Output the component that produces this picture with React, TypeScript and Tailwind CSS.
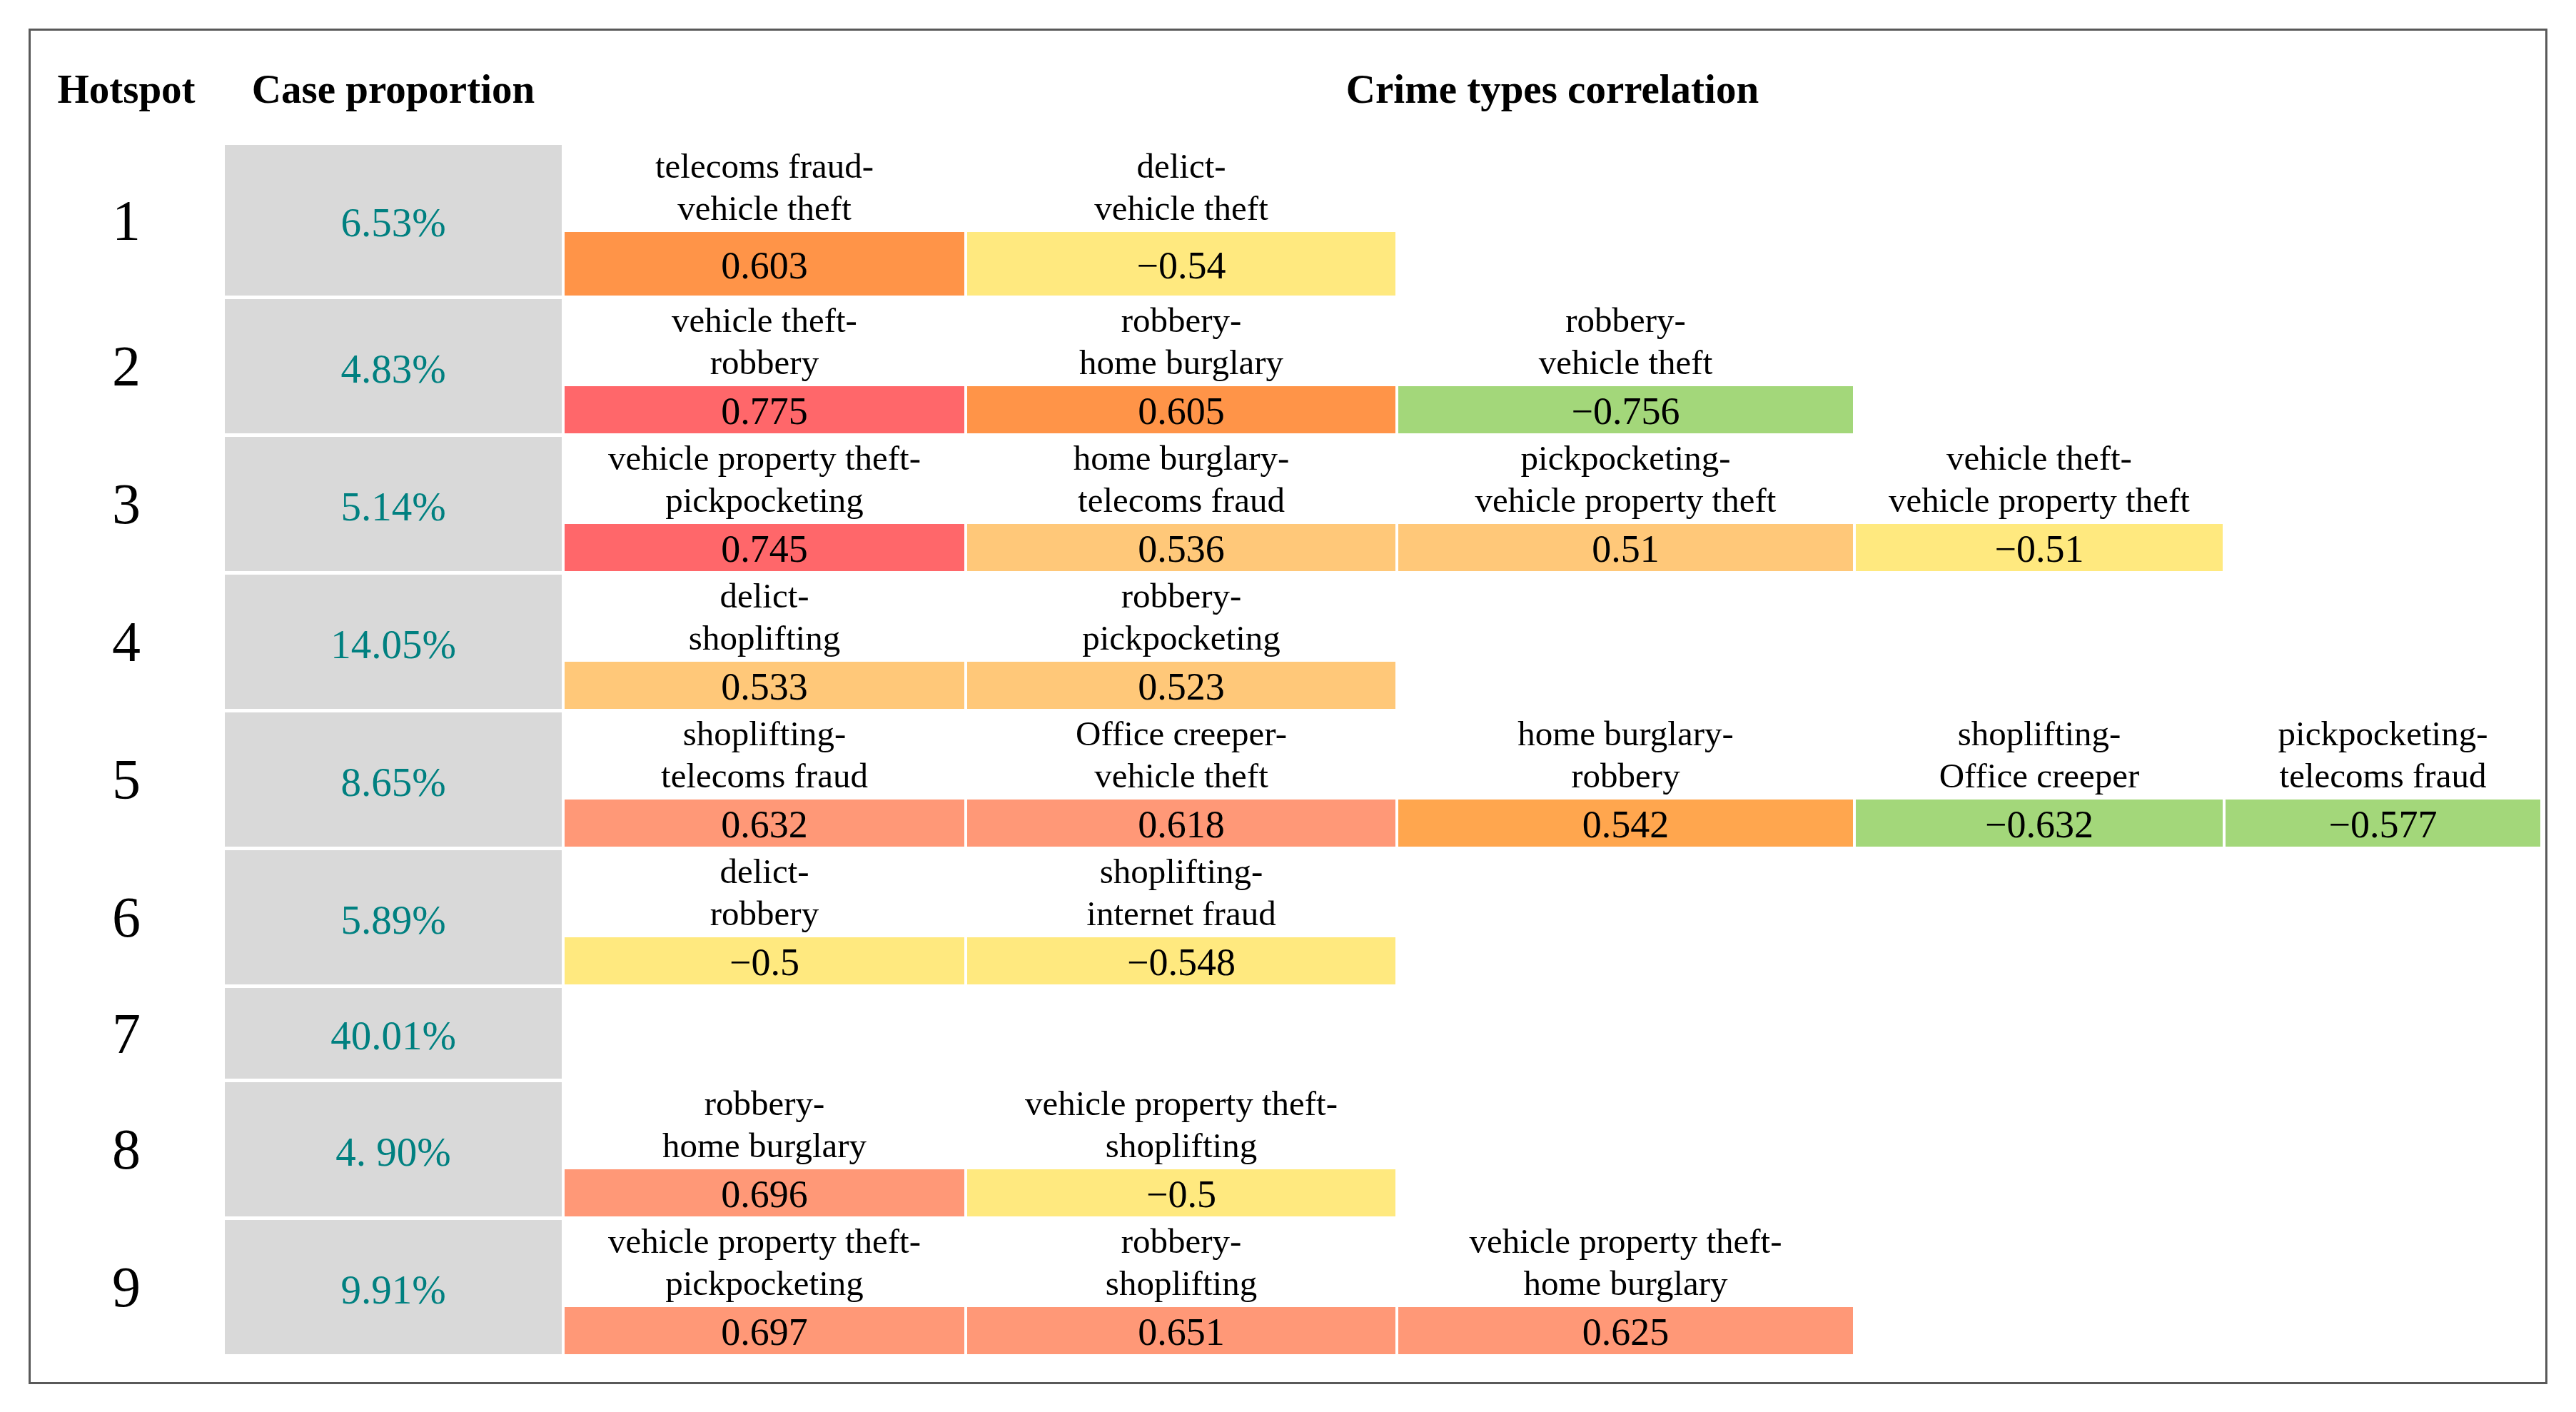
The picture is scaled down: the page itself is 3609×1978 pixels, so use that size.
type Pair = { top: string; bottom: string; value: string; color: string };
type Row = { id: number; share: string; height: string; pairs: Pair[] };

// heat colours used in the correlation cells
const RED = 'bg-[#ff676a]';
const ORANGE = 'bg-[#ff9448]';
const AMBER = 'bg-[#ffa64e]';
const SALMON = 'bg-[#ff9877]';
const PEACH = 'bg-[#ffc879]';
const YELLOW = 'bg-[#ffe97f]';
const GREEN = 'bg-[#a3d77a]';

const rows: Row[] = [
  {
    id: 1,
    share: '6.53%',
    height: 'h-[211px]',
    pairs: [
      { top: 'telecoms fraud-', bottom: 'vehicle theft', value: '0.603', color: ORANGE },
      { top: 'delict-', bottom: 'vehicle theft', value: '\u22120.54', color: YELLOW },
    ],
  },
  {
    id: 2,
    share: '4.83%',
    height: 'h-[188px]',
    pairs: [
      { top: 'vehicle theft-', bottom: 'robbery', value: '0.775', color: RED },
      { top: 'robbery-', bottom: 'home burglary', value: '0.605', color: ORANGE },
      { top: 'robbery-', bottom: 'vehicle theft', value: '\u22120.756', color: GREEN },
    ],
  },
  {
    id: 3,
    share: '5.14%',
    height: 'h-[188px]',
    pairs: [
      { top: 'vehicle property theft-', bottom: 'pickpocketing', value: '0.745', color: RED },
      { top: 'home burglary-', bottom: 'telecoms fraud', value: '0.536', color: PEACH },
      { top: 'pickpocketing-', bottom: 'vehicle property theft', value: '0.51', color: PEACH },
      { top: 'vehicle theft-', bottom: 'vehicle property theft', value: '\u22120.51', color: YELLOW },
    ],
  },
  {
    id: 4,
    share: '14.05%',
    height: 'h-[188px]',
    pairs: [
      { top: 'delict-', bottom: 'shoplifting', value: '0.533', color: PEACH },
      { top: 'robbery-', bottom: 'pickpocketing', value: '0.523', color: PEACH },
    ],
  },
  {
    id: 5,
    share: '8.65%',
    height: 'h-[188px]',
    pairs: [
      { top: 'shoplifting-', bottom: 'telecoms fraud', value: '0.632', color: SALMON },
      { top: 'Office creeper-', bottom: 'vehicle theft', value: '0.618', color: SALMON },
      { top: 'home burglary-', bottom: 'robbery', value: '0.542', color: AMBER },
      { top: 'shoplifting-', bottom: 'Office creeper', value: '\u22120.632', color: GREEN },
      { top: 'pickpocketing-', bottom: 'telecoms fraud', value: '\u22120.577', color: GREEN },
    ],
  },
  {
    id: 6,
    share: '5.89%',
    height: 'h-[188px]',
    pairs: [
      { top: 'delict-', bottom: 'robbery', value: '\u22120.5', color: YELLOW },
      { top: 'shoplifting-', bottom: 'internet fraud', value: '\u22120.548', color: YELLOW },
    ],
  },
  { id: 7, share: '40.01%', height: 'h-[127px]', pairs: [] },
  {
    id: 8,
    share: '4. 90%',
    height: 'h-[188px]',
    pairs: [
      { top: 'robbery-', bottom: 'home burglary', value: '0.696', color: SALMON },
      { top: 'vehicle property theft-', bottom: 'shoplifting', value: '\u22120.5', color: YELLOW },
    ],
  },
  {
    id: 9,
    share: '9.91%',
    height: 'h-[188px]',
    pairs: [
      { top: 'vehicle property theft-', bottom: 'pickpocketing', value: '0.697', color: SALMON },
      { top: 'robbery-', bottom: 'shoplifting', value: '0.651', color: SALMON },
      { top: 'vehicle property theft-', bottom: 'home burglary', value: '0.625', color: SALMON },
    ],
  },
];

function HotspotRow({ row }: { row: Row }) {
  return (
    <div className={`flex gap-[4px] ${row.height}`}>
      <div className="flex w-[268px] items-center justify-center text-[80px] leading-none">
        {row.id}
      </div>
      <div className="flex w-[472px] items-center justify-center bg-[#d9d9d9] pt-[6px] text-[57px] leading-none text-[#008080]">
        {row.share}
      </div>
      <div className="grid flex-1 grid-cols-[560px_600px_637px_514px_441px] gap-x-[4px]">
        {row.pairs.map((pair, index) => (
          <div key={index} className="flex flex-col">
            <div className="h-[122px] text-center text-[49px] leading-[59px]">
              {pair.top}
              <br />
              {pair.bottom}
            </div>
            <div
              className={`flex flex-1 items-center justify-center pt-[4px] text-[54px] leading-none ${pair.color}`}
            >
              {pair.value}
            </div>
          </div>
        ))}
      </div>
    </div>
  );
}

export default function App() {
  return (
    <div className="min-h-screen bg-white font-['Liberation_Serif','Times_New_Roman',serif] text-black">
      <div className="ml-[40px] mt-[40px] w-[3529px] border-[3px] border-[#595959] pb-[39px] pr-[7px]">
        {/* Header */}
        <div className="flex h-[160px] gap-[4px] pt-[53px] text-[57px] font-bold leading-[57px]">
          <div className="w-[268px] text-center">Hotspot</div>
          <div className="w-[472px] text-center">Case proportion</div>
          <div className="flex-1 text-center">Crime types correlation</div>
        </div>

        {/* Rows */}
        <div className="flex flex-col gap-[5px]">
          {rows.map((row) => (
            <HotspotRow key={row.id} row={row} />
          ))}
        </div>
      </div>
    </div>
  );
}
